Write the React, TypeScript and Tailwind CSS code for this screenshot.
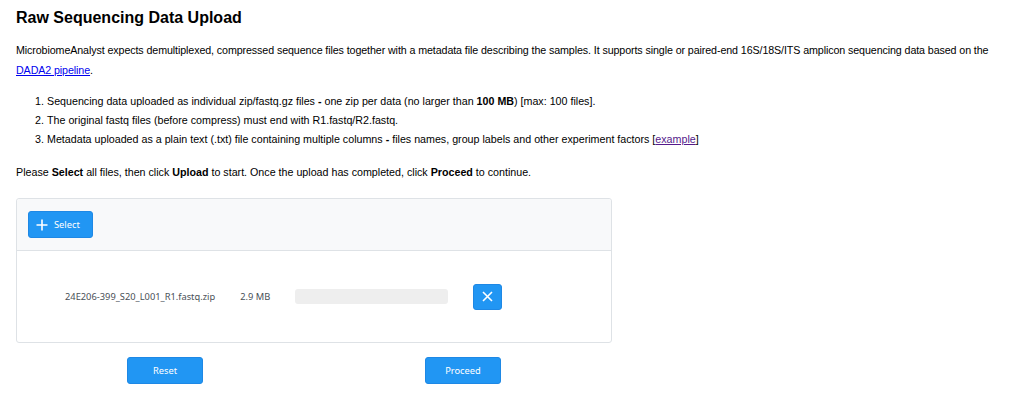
import {FC} from "react";

const PlusIcon: FC = () => (
    <svg width="12" height="12" viewBox="0 0 12 12" className="shrink-0">
        <path d="M6 0.5v11M0.5 6h11" stroke="white" strokeWidth="1.6" fill="none"/>
    </svg>
);

const CloseIcon: FC = () => (
    <svg width="11" height="11" viewBox="0 0 11 11">
        <path d="M1 1l9 9M10 1l-9 9" stroke="white" strokeWidth="1.6" fill="none"/>
    </svg>
);

const App: FC = () => {
    const uiFont = "font-['Noto_Sans','Open_Sans',sans-serif]";

    return (
        <div className="bg-white min-h-[405px] pl-4 pr-[3px] pt-2 font-['Liberation_Sans',Arial,sans-serif] text-black">
            <h2 className="text-[16px] font-bold leading-[20px] mb-[12px]">
                Raw Sequencing Data Upload
            </h2>
            <p className="text-[10.7px] tracking-[-0.1px] leading-[20px]">
                MicrobiomeAnalyst expects demultiplexed, compressed sequence files together with a metadata file describing the samples. It supports single or paired-end 16S/18S/ITS amplicon sequencing data based on the{" "}
                <a href="#" className="text-[#0000ee] underline">DADA2 pipeline</a>.
            </p>
            <ol className="list-decimal pl-[31px] mt-[12px] text-[10.7px] leading-[19px]">
                <li>Sequencing data uploaded as individual zip/fastq.gz files <b>-</b> one zip per data (no larger than <b>100 MB</b>) [max: 100 files].</li>
                <li>The original fastq files (before compress) must end with R1.fastq/R2.fastq.</li>
                <li>Metadata uploaded as a plain text (.txt) file containing multiple columns <b>-</b> files names, group labels and other experiment factors [<a href="#" className="text-[#551a8b] underline">example</a>]</li>
            </ol>
            <p className="text-[10.7px] leading-[20px] mt-[13px]">
                Please <b>Select</b> all files, then click <b>Upload</b> to start. Once the upload has completed, click <b>Proceed</b> to continue.
            </p>

            <div className={`w-[596px] mt-[16px] ${uiFont} text-[9.3px]`}>
                <div className="border border-[#dee2e6] rounded-[3px]">
                    <div className="bg-[#f8f9fa] border-b border-[#dee2e6] rounded-t-[3px] px-[11px] py-[12px]">
                        <button className="flex items-center gap-[6px] w-[65px] h-[27px] pl-[7px] bg-[#2196f3] border border-[#1e88e5] rounded-[3px] text-white">
                            <PlusIcon/>
                            <span>Select</span>
                        </button>
                    </div>
                    <div className="h-[91px] flex items-center pl-[48px] gap-[25px] text-[#495057]">
                        <span>24E206-399_S20_L001_R1.fastq.zip</span>
                        <span>2.9 MB</span>
                        <div className="w-[153px] h-[15px] bg-[#eeeeee] rounded-[3px]"/>
                        <button className="w-[29px] h-[26px] flex items-center justify-center bg-[#2196f3] border border-[#1e88e5] rounded-[3px]">
                            <CloseIcon/>
                        </button>
                    </div>
                </div>
                <div className="grid grid-cols-2 mt-[14px]">
                    <div className="flex justify-center">
                        <button className="w-[76px] h-[27px] bg-[#2196f3] border border-[#1e88e5] rounded-[3px] text-white">Reset</button>
                    </div>
                    <div className="flex justify-center">
                        <button className="w-[76px] h-[27px] bg-[#2196f3] border border-[#1e88e5] rounded-[3px] text-white">Proceed</button>
                    </div>
                </div>
            </div>
        </div>
    );
}

export default App;
